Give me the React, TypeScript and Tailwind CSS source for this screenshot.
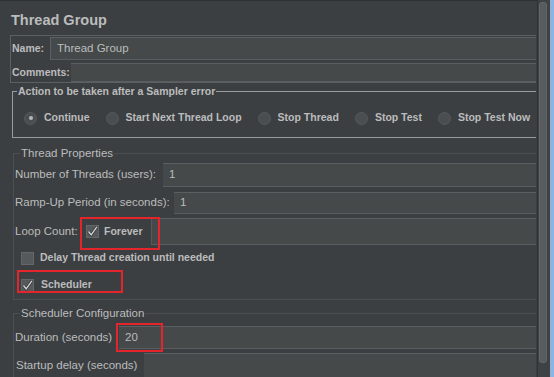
import React from 'react'

const text = 'text-[#bbbcbd]'

const Radio = ({ label, checked }: { label: string; checked?: boolean }) => (
  <div className='flex items-center gap-[7px] shrink-0'>
    <span className='w-[13px] h-[13px] rounded-full bg-[#4a4e50] border border-[#55595b] flex items-center justify-center'>
      {checked && <span className='w-[4px] h-[4px] rounded-full bg-[#b8b8b8]' />}
    </span>
    <span className={`${text} font-bold text-[10.5px] whitespace-nowrap`}>{label}</span>
  </div>
)

const Check = ({ checked }: { checked?: boolean }) => (
  <span className='w-[13px] h-[13px] bg-[#56595b] border border-[#646769] flex items-center justify-center shrink-0'>
    {checked && (
      <svg width='11' height='11' viewBox='0 0 11 11'>
        <path d='M1.5 5.5 L4.2 8.8 L9.8 0.8' fill='none' stroke='#2a2c2d' strokeWidth='2.6' />
        <path d='M1.5 5.5 L4.2 8.8 L9.8 0.8' fill='none' stroke='#d4d4d4' strokeWidth='1.4' />
      </svg>
    )}
  </span>
)

const Field = ({ value, className = '' }: { value?: string; className?: string }) => (
  <div className={`flex-1 bg-[#45494a] border-t border-b border-t-[#5c5f61] border-b-[#5a5d5f] flex items-center pl-[6px] ${text} text-[11.5px] ${className}`}>
    {value}
  </div>
)

const Row = ({ label, w, value, className = '' }: { label: string; w: string; value?: string; className?: string }) => (
  <div className={`flex items-center ${className}`}>
    <span className={`${text} text-[11.5px] ${w} shrink-0 whitespace-nowrap`}>{label}</span>
    <Field value={value} className='self-stretch' />
  </div>
)

const Legend = ({ children }: { children: React.ReactNode }) => (
  <legend className={`ml-[5px] px-[1px] leading-[14px] ${text} text-[11.5px]`}>{children}</legend>
)

export default function App() {
  return (
    <div className='relative flex w-[554px] h-[377px] overflow-hidden bg-[#3c3f41]' style={{ fontFamily: '"Liberation Sans", Arial, sans-serif' }}>
      <div className='flex-1 pl-[10px] pr-[1px] border-t border-[#2e3032]'>
        <div className='h-[34px] pt-[11px] pl-[1px]'>
          <h1 className={`${text} font-bold text-[14.5px] leading-[17px]`}>Thread Group</h1>
        </div>

        <div className='h-[48px] border border-[#5d6062] border-r-0 pl-[1px] flex flex-col'>
          <div className='flex h-[24px] mt-[1px]'>
            <span className={`${text} font-bold text-[10.5px] w-[38px] self-center`}>Name:</span>
            <Field value='Thread Group' className='border-l border-l-[#5c5f61]' />
          </div>
          <div className='flex h-[19px] mt-[3px]'>
            <span className={`${text} font-bold text-[10.5px] w-[59px] self-center`}>Comments:</span>
            <Field />
          </div>
        </div>

        <fieldset className='mt-[1px] ml-[2px] border border-[#9a9c9e] border-r-0 pb-[11px]'>
          <legend className={`ml-[4px] px-[1px] leading-[14px] ${text} font-bold text-[10.5px]`}>Action to be taken after a Sampler error</legend>
          <div className='flex items-center h-[16px] mt-[12px] pl-[11px] gap-[16px]'>
            <Radio label='Continue' checked />
            <Radio label='Start Next Thread Loop' />
            <Radio label='Stop Thread' />
            <Radio label='Stop Test' />
            <Radio label='Stop Test Now' />
          </div>
        </fieldset>

        <fieldset className='mt-[8px] ml-[3px] border border-[#4c4f51] border-r-0 pb-[7px] pl-[1px]'>
          <Legend>Thread Properties</Legend>
          <Row label='Number of Threads (users):' w='w-[148px]' value='1' className='h-[24px] mt-[3px]' />
          <Row label='Ramp-Up Period (in seconds):' w='w-[159px]' value='1' className='h-[22px] mt-[5px]' />
          <div className='flex items-center h-[27px] mt-[4px]'>
            <span className={`${text} text-[11.5px] w-[71px] shrink-0`}>Loop Count:</span>
            <div className='flex items-center gap-[5px] w-[65px] shrink-0'>
              <Check checked />
              <span className={`${text} font-bold text-[10.5px]`}>Forever</span>
            </div>
            <Field className='self-stretch border-l border-l-[#56595b]' />
          </div>
          <div className='flex items-center gap-[6px] h-[14px] mt-[6px] pl-[6px]'>
            <Check />
            <span className={`${text} font-bold text-[10.5px]`}>Delay Thread creation until needed</span>
          </div>
          <div className='flex items-center gap-[7px] h-[14px] mt-[13px] pl-[6px]'>
            <Check checked />
            <span className={`${text} font-bold text-[10.5px]`}>Scheduler</span>
          </div>
        </fieldset>

        <fieldset className='mt-[6px] ml-[3px] border border-[#4c4f51] border-r-0 pl-[1px]'>
          <Legend>Scheduler Configuration</Legend>
          <Row label='Duration (seconds)' w='w-[104px]' value='20' className='h-[23px] mt-[6px]' />
          <Row label='Startup delay (seconds)' w='w-[128px]' className='h-[26px] mt-[4px] pl-[1px]' />
        </fieldset>
      </div>

      <div className='w-[13px] shrink-0 border-l border-[#2f3133] bg-[#3f4244] pt-[2px] pl-[1px] pr-[3px]'>
        <div className='h-[361px] rounded-[3px] bg-[#595c5e] border border-[#626567]' />
      </div>
      <div className='w-[4px] shrink-0 bg-[#8db4dc]' />

      <div className='absolute left-[80px] top-[217px] w-[80px] h-[33px] border-2 border-[#e4252b]' />
      <div className='absolute left-[17px] top-[270px] w-[106px] h-[23px] border-2 border-[#e4252b]' />
      <div className='absolute left-[116px] top-[323px] w-[47px] h-[29px] border-2 border-[#e4252b]' />
    </div>
  )
}
